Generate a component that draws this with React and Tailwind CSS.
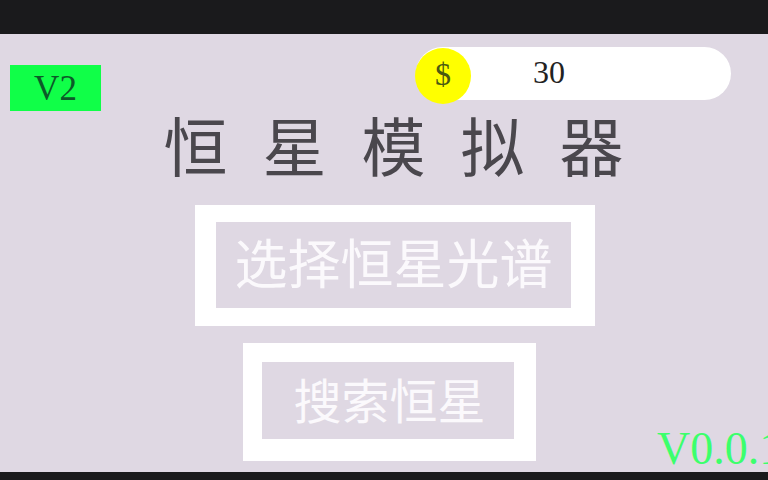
const serif = "font-['Liberation_Serif',serif]"

const cjk = "font-['Noto_Sans_CJK_SC',sans-serif]"

const App = () => {
  return (
    <div className="w-[768px] h-[480px] overflow-hidden flex flex-col bg-[#dfd8e3]">
      <div className="h-[34px] shrink-0 bg-[#1a1a1c]" />

      <main className="flex-1 min-h-0 flex flex-col">
        {/* Top row */}
        <div className="h-[78px] shrink-0 flex items-start pl-[10px] pr-[37px]">
          <div className={`${serif} mt-[31px] w-[91px] h-[46px] flex items-center justify-center bg-[#10ff48] text-[#0c5a28] text-[35px] leading-none`}>
            V2
          </div>
          <div className="ml-auto mt-[13px] w-[315px] h-[53px] flex items-center rounded-full bg-white">
            <div className={`${serif} -ml-px mt-[5px] pb-[4px] w-[56px] h-[56px] shrink-0 rounded-full bg-[#ffff00] flex items-center justify-center text-[#4a5a12] text-[32px] leading-none`}>
              $
            </div>
            <span className={`${serif} ml-[62px] mb-[4px] text-[#222] text-[32px] leading-none`}>30</span>
          </div>
        </div>

        {/* Title */}
        <h1 className={`${cjk} h-[93px] shrink-0 pb-[32px] pl-[19px] flex items-center justify-center gap-[35px] text-[64px] leading-none font-normal text-[#4a474d]`}>
          <span>恒</span>
          <span>星</span>
          <span>模</span>
          <span>拟</span>
          <span>器</span>
        </h1>

        <button className={`${cjk} ml-[195px] w-[400px] h-[121px] shrink-0 pb-[8px] border-white border-t-[17px] border-b-[18px] border-l-[21px] border-r-[24px] flex items-center justify-center font-normal text-[53px] leading-none text-[#fbf9fc]`}>
          选择恒星光谱
        </button>

        {/* Bottom row */}
        <div className="mt-[17px] grid grid-cols-[243px_293px_232px] items-end">
          <div />
          <button className={`${cjk} h-[118px] pb-[6px] pl-[3px] border-white border-t-[19px] border-b-[22px] border-l-[19px] border-r-[22px] flex items-center justify-center font-normal text-[48px] leading-none text-[#fbf9fc]`}>
            搜索恒星
          </button>
          <div className={`${serif} pl-[121px] overflow-hidden whitespace-nowrap text-[46px] leading-none text-[#3cff6c] mb-[-11px]`}>
            V0.0.1
          </div>
        </div>
      </main>

      <div className="h-[8px] shrink-0 bg-[#1a1a1c]" />
    </div>
  )
}

export default App
